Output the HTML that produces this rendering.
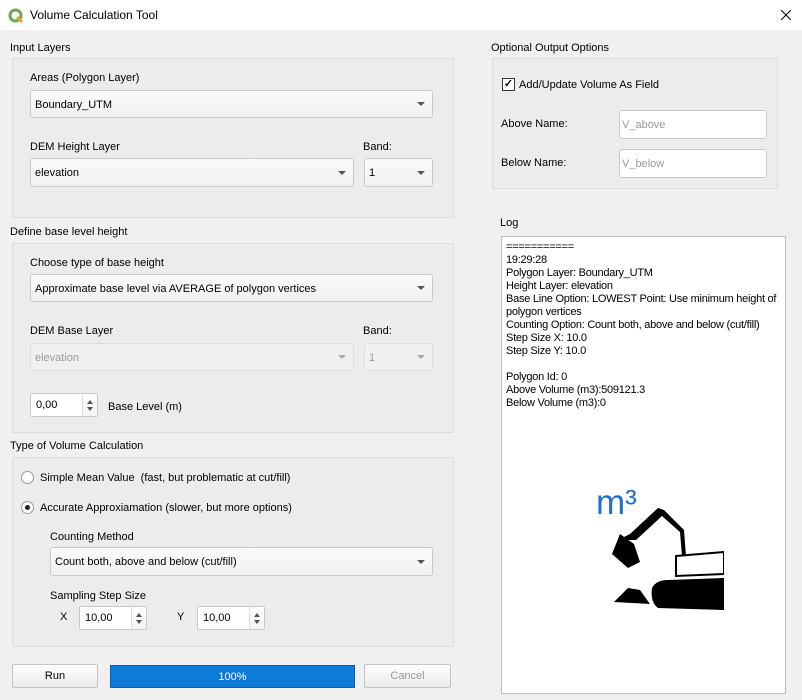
<!DOCTYPE html>
<html><head><meta charset="utf-8"><style>
body{margin:0;width:802px;height:700px;background:#f0f0f0;font-family:"Liberation Sans",sans-serif;font-size:11px;color:#000;position:relative;overflow:hidden}
.a{position:absolute}
.t{position:absolute;white-space:nowrap;line-height:13px}
.g{position:absolute;border:1px solid #dcdcdc;border-radius:2px;background:#ececec}
.cb{position:absolute;box-sizing:border-box;border:1px solid #c9c9c9;border-radius:3px;background:linear-gradient(#fbfbfb,#f0f0f0);padding-left:4px;line-height:28px;white-space:nowrap}
.cb:after{content:"";position:absolute;right:7px;top:50%;margin-top:-2px;border-left:4px solid transparent;border-right:4px solid transparent;border-top:4px solid #555}
.dis{color:#9a9a9a;background:#f0f0f0;border-color:#ddd}
.dis:after{border-top-color:#aaa}
.sp{position:absolute;box-sizing:border-box;border:1px solid #c9c9c9;border-radius:2px;background:#fff;padding-left:5px;line-height:23px}
.sp:after{content:"";position:absolute;right:0;top:0;bottom:0;width:14px;border-left:1px solid #ddd;background:linear-gradient(#fff,#f3f3f3)}
.sp i{position:absolute;right:4px;width:0;height:0;border-left:3px solid transparent;border-right:3px solid transparent;z-index:1}
.in{position:absolute;box-sizing:border-box;border:1px solid #c9c9c9;border-radius:3px;background:#fff;color:#999;padding-left:2px;line-height:28px}
.btn{position:absolute;box-sizing:border-box;border:1px solid #c4c4c4;border-radius:2px;background:linear-gradient(#fdfdfd,#ececec);text-align:center;line-height:23px}
</style></head><body>
<div class="a" style="left:0;top:0;width:802px;height:30px;background:#fff"></div>
<svg class="a" style="left:8px;top:8px" width="16" height="16" viewBox="0 0 16 16"><circle cx="7.5" cy="7.5" r="5.5" fill="none" stroke="#6aa84f" stroke-width="3"/><path d="M9 9l5 5" stroke="#e8a33c" stroke-width="3"/></svg>
<div class="t" style="left:30px;top:9px;font-size:12px">Volume Calculation Tool</div>
<svg class="a" style="left:781px;top:10px" width="10" height="10"><path d="M0 0L10 10M10 0L0 10" stroke="#000" stroke-width="1"/></svg>

<div class="t" style="left:10px;top:42px">Input Layers</div>
<div class="g" style="left:12px;top:58px;width:440px;height:158px"></div>
<div class="t" style="left:30px;top:72px">Areas (Polygon Layer)</div>
<div class="cb" style="left:30px;top:90px;width:403px;height:28px">Boundary_UTM</div>
<div class="t" style="left:30px;top:141px">DEM Height Layer</div>
<div class="t" style="left:363px;top:141px">Band:</div>
<div class="cb" style="left:30px;top:158px;width:324px;height:29px">elevation</div>
<div class="cb" style="left:364px;top:158px;width:69px;height:29px">1</div>

<div class="t" style="left:10px;top:226px">Define base level height</div>
<div class="g" style="left:12px;top:243px;width:440px;height:188px"></div>
<div class="t" style="left:30px;top:257px">Choose type of base height</div>
<div class="cb" style="left:30px;top:274px;width:403px;height:28px">Approximate base level via AVERAGE of polygon vertices</div>
<div class="t" style="left:30px;top:325px">DEM Base Layer</div>
<div class="t" style="left:363px;top:325px">Band:</div>
<div class="cb dis" style="left:30px;top:343px;width:324px;height:28px">elevation</div>
<div class="cb dis" style="left:364px;top:343px;width:69px;height:28px">1</div>
<div class="sp" style="left:30px;top:393px;width:68px;height:24px">0,00<i style="top:6px;border-bottom:4px solid #555"></i><i style="top:13px;border-top:4px solid #555"></i></div>
<div class="t" style="left:108px;top:401px">Base Level (m)</div>

<div class="t" style="left:10px;top:440px">Type of Volume Calculation</div>
<div class="g" style="left:12px;top:457px;width:440px;height:188px"></div>
<div class="a" style="left:21px;top:471px;width:11px;height:11px;border:1px solid #999;border-radius:50%;background:#fff"></div>
<div class="t" style="left:40px;top:472px">Simple Mean Value&nbsp; (fast, but problematic at cut/fill)</div>
<div class="a" style="left:21px;top:501px;width:11px;height:11px;border:1px solid #999;border-radius:50%;background:#fff"></div>
<div class="a" style="left:25px;top:505px;width:5px;height:5px;border-radius:50%;background:#222"></div>
<div class="t" style="left:40px;top:502px">Accurate Approxiamation (slower, but more options)</div>
<div class="t" style="left:50px;top:531px">Counting Method</div>
<div class="cb" style="left:50px;top:547px;width:383px;height:29px">Count both, above and below (cut/fill)</div>
<div class="t" style="left:50px;top:590px">Sampling Step Size</div>
<div class="t" style="left:60px;top:611px">X</div>
<div class="sp" style="left:79px;top:606px;width:68px;height:24px">10,00<i style="top:6px;border-bottom:4px solid #555"></i><i style="top:13px;border-top:4px solid #555"></i></div>
<div class="t" style="left:177px;top:611px">Y</div>
<div class="sp" style="left:197px;top:606px;width:68px;height:24px">10,00<i style="top:6px;border-bottom:4px solid #555"></i><i style="top:13px;border-top:4px solid #555"></i></div>

<div class="btn" style="left:12px;top:664px;width:86px;height:24px">Run</div>
<div class="a" style="left:110px;top:665px;width:243px;height:21px;border:1px solid #0b5fb0;background:#0d7bd8;color:#fff;text-align:center;line-height:22px">100%</div>
<div class="btn" style="left:364px;top:664px;width:87px;height:24px;color:#999">Cancel</div>

<div class="t" style="left:491px;top:42px">Optional Output Options</div>
<div class="g" style="left:492px;top:58px;width:284px;height:129px"></div>
<div class="a" style="left:502px;top:78px;width:11px;height:11px;border:1px solid #333;background:#fff;font-size:11px;line-height:11px;text-align:center;font-weight:bold">✓</div>
<div class="t" style="left:519px;top:79px">Add/Update Volume As Field</div>
<div class="t" style="left:501px;top:118px">Above Name:</div>
<div class="in" style="left:619px;top:110px;width:148px;height:29px">V_above</div>
<div class="t" style="left:501px;top:157px">Below Name:</div>
<div class="in" style="left:619px;top:149px;width:148px;height:29px">V_below</div>

<div class="t" style="left:500px;top:217px">Log</div>
<div class="a" style="left:501px;top:236px;width:283px;height:456px;border:1px solid #bdbdbd;background:#fff"></div>
<div class="a" style="left:506px;top:241px;width:275px;line-height:13px;letter-spacing:-0.25px">===========<br>19:29:28<br>Polygon Layer: Boundary_UTM<br>Height Layer: elevation<br>Base Line Option: LOWEST Point: Use minimum height of<br>polygon vertices<br>Counting Option: Count both, above and below (cut/fill)<br>Step Size X: 10.0<br>Step Size Y: 10.0<br><br>Polygon Id: 0<br>Above Volume (m3):509121.3<br>Below Volume (m3):0</div>
<div class="t" style="left:596px;top:488px;font-size:35px;line-height:30px;color:#1f6fcf">m³</div>
<svg class="a" style="left:612px;top:504px" width="112" height="106" viewBox="0 0 112 106">
<path d="M6 36 L18 30 L46 4 L52 6 L72 26 L74 52 L70 52 L68 28 L50 12 L24 36 Z" fill="#000"/>
<path d="M8 30 L22 40 L28 58 L16 64 L0 50 Z" fill="#000"/>
<path d="M2 98 L16 84 L28 86 L38 100 Z" fill="#000"/>
<path d="M64 52 L112 48 L112 70 L64 72 Z" fill="none" stroke="#000" stroke-width="2"/>
<path d="M40 84 Q44 76 56 76 L112 74 L112 106 L46 104 Q38 98 40 84 Z" fill="#000"/>
</svg>
</body></html>
